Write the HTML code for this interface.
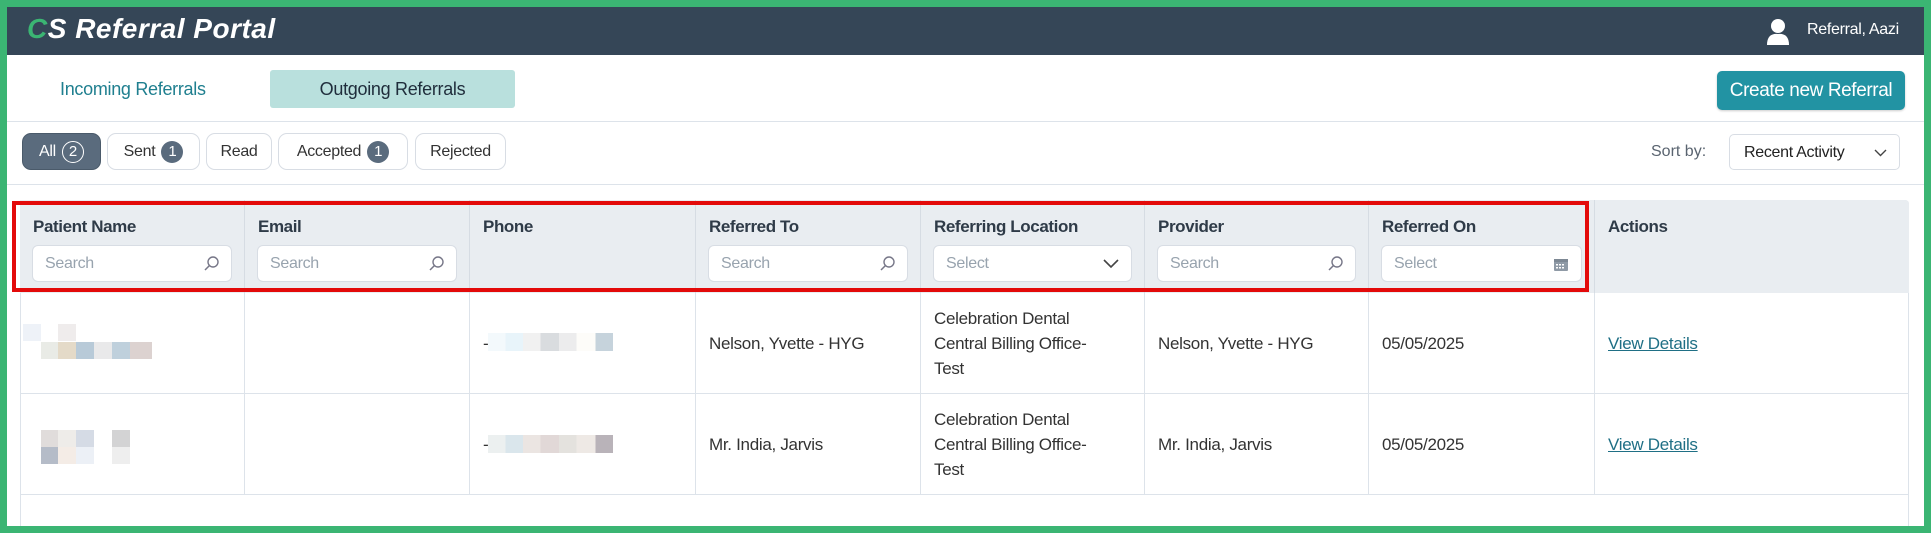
<!DOCTYPE html>
<html style="overflow:hidden;height:533px"><head><meta charset="utf-8"><style>
*{box-sizing:border-box;margin:0;padding:0}
body{width:1931px;height:533px;background:#3bb573;font-family:"Liberation Sans",sans-serif;position:relative;overflow:hidden;color:#333}
.a{position:absolute}
#page{left:7px;top:7px;width:1917px;height:519px;background:#fff;overflow:hidden}
#hdr{left:7px;top:7px;width:1917px;height:48px;background:#354657}
.title{left:27px;top:13px;color:#fff;font-size:28px;font-weight:bold;font-style:italic;letter-spacing:0.5px}
.title span{color:#3bb573}
.user{left:1807px;top:21px;color:#fff;font-size:16px;letter-spacing:-0.3px}
.tab{font-size:18px;letter-spacing:-0.3px}
.chip{top:133px;height:37px;border:1px solid #d8dde4;border-radius:9px;font-size:16px;display:flex;align-items:center;justify-content:center;gap:6px;color:#333;letter-spacing:-0.3px}
.badge{width:22px;height:22px;border-radius:50%;background:#5a6b7d;color:#fff;font-size:15px;display:flex;align-items:center;justify-content:center}
.hline{height:1px;background:#dde3ea;left:7px;width:1917px}
.th{top:200px;height:93px;background:#e9edf1;border-right:1px solid #d6dce3}
.th b{position:absolute;left:13px;top:17px;font-size:17px;font-weight:bold;color:#2f3b48;letter-spacing:-0.4px}
.inp{position:absolute;left:12px;right:12px;top:45px;height:37px;background:#fff;border:1px solid #d8dde4;border-radius:6px;font-size:16px;color:#98a3ae;padding:9px 12px;letter-spacing:-0.3px}
.inp svg{position:absolute;right:12px;top:10px}
.td{height:101px;border-right:1px solid #dde3ea;border-bottom:1px solid #dde3ea;font-size:17px;color:#333;display:flex;align-items:center;padding-left:13px;letter-spacing:-0.3px;line-height:25px}
.px{position:absolute;width:15px;height:17px}
</style></head><body>
<div id="page" class="a"></div>
<div id="hdr" class="a"></div>
<div class="a title"><span>C</span>S Referral Portal</div>
<svg class="a" style="left:1766px;top:18px" width="24" height="28" viewBox="0 0 24 28"><circle cx="12" cy="8" r="7" fill="#fff"/><path d="M1 27 Q1 15 12 16 Q23 15 23 27 Z" fill="#fff"/></svg>
<div class="a user">Referral, Aazi</div>

<div class="a tab" style="left:60px;top:79px;color:#1f7f8f">Incoming Referrals</div>
<div class="a" style="left:270px;top:70px;width:245px;height:38px;background:#b9e0dd;border-radius:3px"></div>
<div class="a tab" style="left:270px;top:79px;width:245px;text-align:center;color:#1f2d3b">Outgoing Referrals</div>
<div class="a" style="left:1717px;top:71px;width:188px;height:39px;background:#2293a3;border-radius:5px;color:#fff;font-size:19px;display:flex;align-items:center;justify-content:center;letter-spacing:-0.4px;box-shadow:0 1px 2px rgba(0,0,0,.2)">Create new Referral</div>
<div class="a hline" style="top:121px"></div>

<div class="a chip" style="left:22px;width:79px;background:#5a6b7d;border-color:#4a5a6a;color:#fff">All <span class="badge" style="border:1.5px solid #fff;background:none">2</span></div>
<div class="a chip" style="left:107px;width:93px">Sent <span class="badge">1</span></div>
<div class="a chip" style="left:206px;width:66px">Read</div>
<div class="a chip" style="left:278px;width:130px">Accepted <span class="badge">1</span></div>
<div class="a chip" style="left:415px;width:91px">Rejected</div>
<div class="a" style="left:1651px;top:143px;font-size:16px;color:#5a6470">Sort by:</div>
<div class="a" style="left:1729px;top:134px;width:171px;height:36px;border:1px solid #d8dde4;border-radius:5px;font-size:16px;color:#222;padding:9px 14px;letter-spacing:-0.3px">Recent Activity
<svg style="position:absolute;right:12px;top:14px" width="13" height="8" viewBox="0 0 13 8"><path d="M1 1 L6.5 6.5 L12 1" stroke="#444" stroke-width="1.4" fill="none"/></svg></div>
<div class="a hline" style="top:184px"></div>

<div class="a" style="left:20px;top:200px;width:1889px;height:326px;border:1px solid #dde3ea;border-bottom:none;border-radius:4px 4px 0 0"></div>

<div class="a th" style="left:20px;width:225px"><b>Patient Name</b><div class="inp">Search<svg width="16" height="16" viewBox="0 0 16 16"><circle cx="10" cy="6" r="5" stroke="#778" stroke-width="1.4" fill="none"/><path d="M6.5 9.5 L2 14" stroke="#778" stroke-width="1.5"/></svg></div></div>
<div class="a th" style="left:245px;width:225px"><b>Email</b><div class="inp">Search<svg width="16" height="16" viewBox="0 0 16 16"><circle cx="10" cy="6" r="5" stroke="#778" stroke-width="1.4" fill="none"/><path d="M6.5 9.5 L2 14" stroke="#778" stroke-width="1.5"/></svg></div></div>
<div class="a th" style="left:470px;width:226px"><b>Phone</b></div>
<div class="a th" style="left:696px;width:225px"><b>Referred To</b><div class="inp">Search<svg width="16" height="16" viewBox="0 0 16 16"><circle cx="10" cy="6" r="5" stroke="#778" stroke-width="1.4" fill="none"/><path d="M6.5 9.5 L2 14" stroke="#778" stroke-width="1.5"/></svg></div></div>
<div class="a th" style="left:921px;width:224px"><b>Referring Location</b><div class="inp">Select<svg width="16" height="12" viewBox="0 0 16 12" style="top:12px"><path d="M1 2 L8 9 L15 2" stroke="#444" stroke-width="1.6" fill="none"/></svg></div></div>
<div class="a th" style="left:1145px;width:224px"><b>Provider</b><div class="inp">Search<svg width="16" height="16" viewBox="0 0 16 16"><circle cx="10" cy="6" r="5" stroke="#778" stroke-width="1.4" fill="none"/><path d="M6.5 9.5 L2 14" stroke="#778" stroke-width="1.5"/></svg></div></div>
<div class="a th" style="left:1369px;width:226px"><b>Referred On</b><div class="inp">Select<svg width="16" height="16" viewBox="0 0 16 16"><rect x="1" y="3" width="14" height="12" rx="1" fill="#8f9aa6"/><rect x="1" y="3" width="14" height="3" fill="#7d8894"/><g fill="#fff"><rect x="3" y="8" width="2" height="1.5"/><rect x="6" y="8" width="2" height="1.5"/><rect x="9" y="8" width="2" height="1.5"/><rect x="3" y="11" width="2" height="1.5"/><rect x="6" y="11" width="2" height="1.5"/><rect x="9" y="11" width="2" height="1.5"/></g></svg></div></div>
<div class="a th" style="left:1595px;width:314px;border-right:none;border-radius:0 4px 0 0"><b>Actions</b></div>

<div class="a" style="left:12px;top:201px;width:1577px;height:91px;border:4px solid #e30a0a"></div>

<!-- row 1 -->
<div class="a td" style="left:20px;top:293px;width:225px"></div>
<div class="a td" style="left:245px;top:293px;width:225px"></div>
<div class="a td" style="left:470px;top:293px;width:226px">-</div>
<div class="a td" style="left:696px;top:293px;width:225px">Nelson, Yvette - HYG</div>
<div class="a td" style="left:921px;top:293px;width:224px">Celebration Dental<br>Central Billing Office-<br>Test</div>
<div class="a td" style="left:1145px;top:293px;width:224px">Nelson, Yvette - HYG</div>
<div class="a td" style="left:1369px;top:293px;width:226px">05/05/2025</div>
<div class="a td" style="left:1595px;top:293px;width:314px;border-right:none"><span style="color:#1f6f85;text-decoration:underline">View Details</span></div>
<!-- row 2 -->
<div class="a td" style="left:20px;top:394px;width:225px"></div>
<div class="a td" style="left:245px;top:394px;width:225px"></div>
<div class="a td" style="left:470px;top:394px;width:226px">-</div>
<div class="a td" style="left:696px;top:394px;width:225px">Mr. India, Jarvis</div>
<div class="a td" style="left:921px;top:394px;width:224px">Celebration Dental<br>Central Billing Office-<br>Test</div>
<div class="a td" style="left:1145px;top:394px;width:224px">Mr. India, Jarvis</div>
<div class="a td" style="left:1369px;top:394px;width:226px">05/05/2025</div>
<div class="a td" style="left:1595px;top:394px;width:314px;border-right:none"><span style="color:#1f6f85;text-decoration:underline">View Details</span></div>

<!-- blurred placeholders -->
<div class="a px" style="left:23px;top:324px;background:#eef2f8;width:18px"></div>
<div class="a px" style="left:58px;top:324px;background:#efecec;width:18px"></div>
<div class="a px" style="left:41px;top:342px;background:#e9ebe6;width:18px"></div>
<div class="a px" style="left:58px;top:342px;background:#e4dac8;width:18px"></div>
<div class="a px" style="left:76px;top:342px;background:#b8cad8;width:18px"></div>
<div class="a px" style="left:94px;top:342px;background:#e9e9ea;width:18px"></div>
<div class="a px" style="left:112px;top:342px;background:#bfd0dc;width:18px"></div>
<div class="a px" style="left:130px;top:342px;background:#dcd2d0;width:22px"></div>
<div class="a px" style="left:41px;top:430px;background:#e0dcdb;width:18px"></div>
<div class="a px" style="left:58px;top:430px;background:#eeece9;width:18px"></div>
<div class="a px" style="left:76px;top:430px;background:#d5dbe5;width:18px"></div>
<div class="a px" style="left:112px;top:430px;background:#d3d3d4;width:18px"></div>
<div class="a px" style="left:41px;top:447px;background:#b5bcc8;width:18px"></div>
<div class="a px" style="left:58px;top:447px;background:#f4ece6;width:18px"></div>
<div class="a px" style="left:76px;top:447px;background:#ecf0f6;width:18px"></div>
<div class="a px" style="left:112px;top:447px;background:#eeeeee;width:18px"></div>
<div class="a" style="left:488px;top:333px;width:125px;height:18px;background:linear-gradient(90deg,#f3f9fc 0 14%,#e8f4fa 14% 28%,#f1f1f1 28% 42%,#d9dcdf 42% 57%,#ececed 57% 71%,#fdfcf9 71% 86%,#c6d3dc 86%)"></div>
<div class="a" style="left:488px;top:435px;width:125px;height:18px;background:linear-gradient(90deg,#ecf0f0 0 14%,#dae6ec 14% 28%,#ebe5e2 28% 42%,#e1d8d7 42% 57%,#e4e2de 57% 71%,#eee9e5 71% 86%,#b9b3b9 86%)"></div>
</body></html>
